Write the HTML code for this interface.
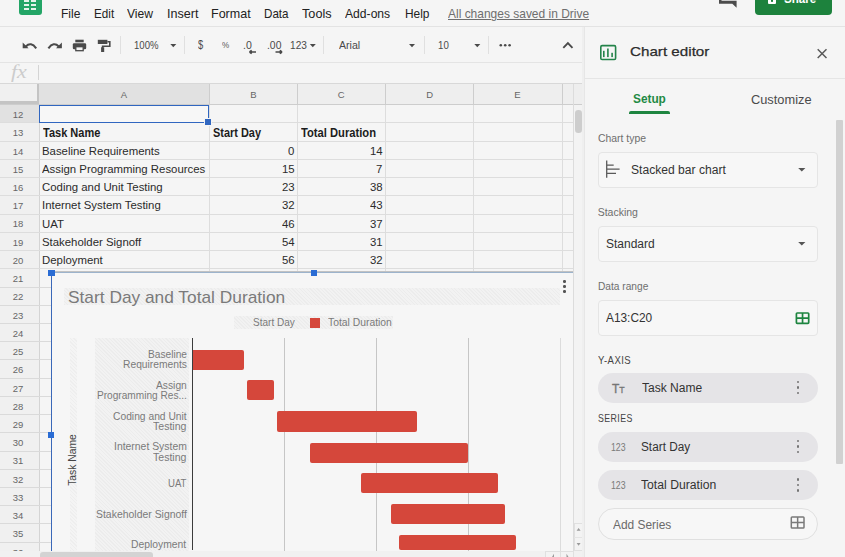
<!DOCTYPE html>
<html><head><meta charset="utf-8">
<style>
*{margin:0;padding:0;box-sizing:border-box}
html,body{width:845px;height:557px;overflow:hidden;background:#f5f5f5;font-family:"Liberation Sans",sans-serif}
#root{position:relative;width:845px;height:557px;overflow:hidden;background:#f5f5f5}
.a{position:absolute}
.t{position:absolute;white-space:nowrap;line-height:1;transform-origin:0 50%}
</style></head><body>
<div id="root">
<div class="a" style="left:19px;top:-6px;width:22.5px;height:21px;background:#23a566;border-radius:3px"></div>
<div class="a" style="left:24px;top:-1px;width:12.2px;height:11.4px;background:#e4f3ea;"></div>
<div class="a" style="left:24px;top:2.4px;width:12.2px;height:1.6px;background:#23a566;"></div>
<div class="a" style="left:29.4px;top:-1px;width:1.5px;height:11.4px;background:#23a566;"></div>
<div class="a" style="left:24px;top:6.3px;width:12.2px;height:1.5px;background:#23a566;"></div>
<div class="t" style="left:61.10px;top:7.25px;font-size:13px;color:#222;transform:scaleX(0.9266);">File</div>
<div class="t" style="left:93.60px;top:7.25px;font-size:13px;color:#222;transform:scaleX(0.8983);">Edit</div>
<div class="t" style="left:127.30px;top:7.25px;font-size:13px;color:#222;transform:scaleX(0.9321);">View</div>
<div class="t" style="left:166.50px;top:7.25px;font-size:13px;color:#222;transform:scaleX(0.9662);">Insert</div>
<div class="t" style="left:211.30px;top:7.25px;font-size:13px;color:#222;transform:scaleX(0.9639);">Format</div>
<div class="t" style="left:263.90px;top:7.25px;font-size:13px;color:#222;transform:scaleX(0.8945);">Data</div>
<div class="t" style="left:302.40px;top:7.25px;font-size:13px;color:#222;transform:scaleX(0.9745);">Tools</div>
<div class="t" style="left:345.40px;top:7.25px;font-size:13px;color:#222;transform:scaleX(0.9332);">Add-ons</div>
<div class="t" style="left:404.50px;top:7.25px;font-size:13px;color:#222;transform:scaleX(0.9159);">Help</div>
<div class="t" style="left:448.30px;top:7.25px;font-size:13px;color:#6e6e6e;transform:scaleX(0.9211);text-decoration:underline;text-decoration-thickness:1px;text-underline-offset:0.5px;">All changes saved in Drive</div>
<svg class="a" style="left:716px;top:0" width="26" height="10" viewBox="716 0 26 10"><path d="M719 -2 h2.500 v2.700 h15.100 v7 l-4.300 -4 h-13.300z" fill="#4c4c4c"/></svg>
<div class="a" style="left:754.7px;top:-10px;width:77.4px;height:25.4px;background:#1d823d;border-radius:4px"></div>
<div class="t" style="left:784.20px;top:-7.65px;font-size:13px;color:#fff;font-weight:bold;transform:scaleX(0.8886);">Share</div>
<div class="a" style="left:768px;top:-3px;width:8px;height:6.5px;background:#fff;border-radius:1px"></div>
<div class="a" style="left:771.3px;top:-1px;width:1.4px;height:2.6px;background:#1d823d;border-radius:0.7px"></div>
<div class="a" style="left:0px;top:26px;width:845px;height:1px;background:#e3e3e3;"></div>
<svg class="a" style="left:0;top:27px" width="584" height="36" viewBox="0 27 584 36">
 <g fill="none" stroke="#4a4a4a" stroke-width="2.100">
  <path d="M25.800 46.400 Q31 41.300 36.200 48.300"/>
  <path d="M58.800 46.400 Q53.600 41.300 48.400 48.300"/>
 </g>
 <path d="M22.700 42.400 v5.900 h5.900z" fill="#4a4a4a"/>
 <path d="M61.900 42.400 v5.900 h-5.900z" fill="#4a4a4a"/>
 <rect x="75.300" y="39.700" width="8.400" height="2.600" fill="#4a4a4a"/>
 <rect x="72.800" y="43.200" width="13.400" height="6" rx="1.300" fill="#4a4a4a"/>
 <rect x="75.800" y="46.700" width="7.400" height="4" fill="#f5f5f5" stroke="#4a4a4a" stroke-width="1.300"/>
 <rect x="97.800" y="39.800" width="9.600" height="4.200" fill="#4a4a4a"/>
 <path d="M107.400 41.700 h2.400 v4.600 h-7.200 v2" fill="none" stroke="#4a4a4a" stroke-width="1.600"/>
 <rect x="101.100" y="47.300" width="3.100" height="4.700" fill="#4a4a4a"/>
 <g stroke="#e0e0e0" stroke-width="1">
  <line x1="120.500" y1="36" x2="120.500" y2="54"/>
  <line x1="184.500" y1="36" x2="184.500" y2="54"/>
  <line x1="323.500" y1="36" x2="323.500" y2="54"/>
  <line x1="424.500" y1="36" x2="424.500" y2="54"/>
  <line x1="488.500" y1="36" x2="488.500" y2="54"/>
 </g>
 <path d="M170.300 44 h6 l-3 3.300z" fill="#4a4a4a"/>
 <path d="M309.800 44 h6 l-3 3.300z" fill="#4a4a4a"/>
 <path d="M409 44 h6 l-3 3.300z" fill="#4a4a4a"/>
 <path d="M474.300 44 h6 l-3 3.300z" fill="#4a4a4a"/>
 <path d="M249.500 52 h6.500 M249.500 52 l2.200 -1.700 M249.500 52 l2.200 1.700" stroke="#4a4a4a" stroke-width="1.600" fill="none"/>
 <path d="M275.500 52 h6.500 M282 52 l-2.200 -1.700 M282 52 l-2.200 1.700" stroke="#4a4a4a" stroke-width="1.600" fill="none"/>
 <circle cx="500.800" cy="45.300" r="1.300" fill="#4a4a4a"/><circle cx="505.200" cy="45.300" r="1.300" fill="#4a4a4a"/><circle cx="509.600" cy="45.300" r="1.300" fill="#4a4a4a"/>
 <path d="M563.300 47.800 l4.600 -4.600 4.600 4.600" fill="none" stroke="#4a4a4a" stroke-width="1.900"/>
</svg>
<div class="t" style="left:134.00px;top:39.63px;font-size:11px;color:#4a4a4a;transform:scaleX(0.8711);">100%</div>
<div class="t" style="left:198.20px;top:39.44px;font-size:12px;color:#4a4a4a;transform:scaleX(0.7776);">$</div>
<div class="t" style="left:221.60px;top:40.26px;font-size:9.5px;color:#5a5a5a;transform:scaleX(0.8533);">%</div>
<div class="t" style="left:242.80px;top:39.93px;font-size:11px;color:#4a4a4a;transform:scaleX(0.9578);">.0</div>
<div class="t" style="left:266.60px;top:39.93px;font-size:11px;color:#4a4a4a;transform:scaleX(0.9404);">.00</div>
<div class="t" style="left:290.00px;top:39.93px;font-size:11px;color:#4a4a4a;transform:scaleX(0.9197);">123</div>
<div class="t" style="left:339.00px;top:39.83px;font-size:11px;color:#4a4a4a;transform:scaleX(0.9636);">Arial</div>
<div class="t" style="left:438.20px;top:39.63px;font-size:11px;color:#4a4a4a;transform:scaleX(0.8816);">10</div>
<div class="a" style="left:0px;top:62px;width:584px;height:1px;background:#e4e4e4;"></div>
<div class="t" style="left:10.500px;top:62.500px;font-family:'Liberation Serif',serif;font-style:italic;font-size:18px;color:#cccccc;transform:scaleX(1.22)">fx</div>
<div class="a" style="left:38px;top:65px;width:1px;height:15px;background:#d4d4d4;"></div>
<div class="a" style="left:0px;top:83px;width:584px;height:1px;background:#d8d8d8;"></div>
<div class="a" style="left:0px;top:84px;width:574px;height:20px;background:#eeeeee;"></div>
<div class="a" style="left:39px;top:84px;width:170px;height:20px;background:#e1e1e1;"></div>
<div class="a" style="left:0px;top:84px;width:39px;height:21px;background:#f0f0f0;border-right:2.500px solid #c4c4c4;border-bottom:4px solid #c4c4c4"></div>
<div class="t" style="left:120.81px;top:89.66px;font-size:9.5px;color:#666;">A</div>
<div class="t" style="left:250.24px;top:89.66px;font-size:9.5px;color:#666;">B</div>
<div class="t" style="left:337.86px;top:89.66px;font-size:9.5px;color:#666;">C</div>
<div class="t" style="left:426.26px;top:89.66px;font-size:9.5px;color:#666;">D</div>
<div class="t" style="left:514.34px;top:89.66px;font-size:9.5px;color:#666;">E</div>
<div class="a" style="left:209px;top:84px;width:1px;height:20px;background:#cdcdcd;"></div>
<div class="a" style="left:297px;top:84px;width:1px;height:20px;background:#cdcdcd;"></div>
<div class="a" style="left:385px;top:84px;width:1px;height:20px;background:#cdcdcd;"></div>
<div class="a" style="left:473px;top:84px;width:1px;height:20px;background:#cdcdcd;"></div>
<div class="a" style="left:562px;top:84px;width:1px;height:20px;background:#cdcdcd;"></div>
<div class="a" style="left:0px;top:104px;width:574px;height:1px;background:#cdcdcd;"></div>
<div class="a" style="left:0px;top:105px;width:39px;height:452px;background:#f0f0f0;"></div>
<div class="a" style="left:0px;top:105px;width:39px;height:18px;background:#e1e1e1;"></div>
<div class="a" style="left:39px;top:105px;width:1px;height:452px;background:#d4d4d4;"></div>
<div class="t" style="left:12.72px;top:110.07px;font-size:9.5px;color:#666;">12</div>
<div class="a" style="left:0px;top:122.43px;width:574px;height:1px;background:#dddddd;"></div>
<div class="t" style="left:12.72px;top:128.30px;font-size:9.5px;color:#666;">13</div>
<div class="a" style="left:0px;top:140.66px;width:574px;height:1px;background:#dddddd;"></div>
<div class="t" style="left:12.72px;top:146.53px;font-size:9.5px;color:#666;">14</div>
<div class="a" style="left:0px;top:158.89px;width:574px;height:1px;background:#dddddd;"></div>
<div class="t" style="left:12.72px;top:164.76px;font-size:9.5px;color:#666;">15</div>
<div class="a" style="left:0px;top:177.12px;width:574px;height:1px;background:#dddddd;"></div>
<div class="t" style="left:12.72px;top:182.99px;font-size:9.5px;color:#666;">16</div>
<div class="a" style="left:0px;top:195.35px;width:574px;height:1px;background:#dddddd;"></div>
<div class="t" style="left:12.72px;top:201.22px;font-size:9.5px;color:#666;">17</div>
<div class="a" style="left:0px;top:213.58px;width:574px;height:1px;background:#dddddd;"></div>
<div class="t" style="left:12.72px;top:219.45px;font-size:9.5px;color:#666;">18</div>
<div class="a" style="left:0px;top:231.81px;width:574px;height:1px;background:#dddddd;"></div>
<div class="t" style="left:12.72px;top:237.68px;font-size:9.5px;color:#666;">19</div>
<div class="a" style="left:0px;top:250.04px;width:574px;height:1px;background:#dddddd;"></div>
<div class="t" style="left:12.72px;top:255.91px;font-size:9.5px;color:#666;">20</div>
<div class="a" style="left:0px;top:268.27px;width:574px;height:1px;background:#dddddd;"></div>
<div class="t" style="left:12.72px;top:274.14px;font-size:9.5px;color:#666;">21</div>
<div class="a" style="left:0px;top:286.5px;width:51px;height:1px;background:#dadada;"></div>
<div class="t" style="left:12.72px;top:292.37px;font-size:9.5px;color:#666;">22</div>
<div class="a" style="left:0px;top:304.73px;width:51px;height:1px;background:#dadada;"></div>
<div class="t" style="left:12.72px;top:310.60px;font-size:9.5px;color:#666;">23</div>
<div class="a" style="left:0px;top:322.96px;width:51px;height:1px;background:#dadada;"></div>
<div class="t" style="left:12.72px;top:328.83px;font-size:9.5px;color:#666;">24</div>
<div class="a" style="left:0px;top:341.19px;width:51px;height:1px;background:#dadada;"></div>
<div class="t" style="left:12.72px;top:347.06px;font-size:9.5px;color:#666;">25</div>
<div class="a" style="left:0px;top:359.42px;width:51px;height:1px;background:#dadada;"></div>
<div class="t" style="left:12.72px;top:365.29px;font-size:9.5px;color:#666;">26</div>
<div class="a" style="left:0px;top:377.65px;width:51px;height:1px;background:#dadada;"></div>
<div class="t" style="left:12.72px;top:383.52px;font-size:9.5px;color:#666;">27</div>
<div class="a" style="left:0px;top:395.88px;width:51px;height:1px;background:#dadada;"></div>
<div class="t" style="left:12.72px;top:401.75px;font-size:9.5px;color:#666;">28</div>
<div class="a" style="left:0px;top:414.11px;width:51px;height:1px;background:#dadada;"></div>
<div class="t" style="left:12.72px;top:419.98px;font-size:9.5px;color:#666;">29</div>
<div class="a" style="left:0px;top:432.34px;width:51px;height:1px;background:#dadada;"></div>
<div class="t" style="left:12.72px;top:438.21px;font-size:9.5px;color:#666;">30</div>
<div class="a" style="left:0px;top:450.57px;width:51px;height:1px;background:#dadada;"></div>
<div class="t" style="left:12.72px;top:456.44px;font-size:9.5px;color:#666;">31</div>
<div class="a" style="left:0px;top:468.8px;width:51px;height:1px;background:#dadada;"></div>
<div class="t" style="left:12.72px;top:474.67px;font-size:9.5px;color:#666;">32</div>
<div class="a" style="left:0px;top:487.03px;width:51px;height:1px;background:#dadada;"></div>
<div class="t" style="left:12.72px;top:492.90px;font-size:9.5px;color:#666;">33</div>
<div class="a" style="left:0px;top:505.26px;width:51px;height:1px;background:#dadada;"></div>
<div class="t" style="left:12.72px;top:511.13px;font-size:9.5px;color:#666;">34</div>
<div class="a" style="left:0px;top:523.49px;width:51px;height:1px;background:#dadada;"></div>
<div class="t" style="left:12.72px;top:529.36px;font-size:9.5px;color:#666;">35</div>
<div class="a" style="left:0px;top:541.72px;width:51px;height:1px;background:#dadada;"></div>
<div class="t" style="left:12.72px;top:547.59px;font-size:9.5px;color:#666;">36</div>
<div class="a" style="left:0px;top:559.95px;width:51px;height:1px;background:#dadada;"></div>
<div class="a" style="left:209px;top:105px;width:1px;height:168px;background:#dddddd;"></div>
<div class="a" style="left:297px;top:105px;width:1px;height:168px;background:#dddddd;"></div>
<div class="a" style="left:385px;top:105px;width:1px;height:168px;background:#dddddd;"></div>
<div class="a" style="left:473px;top:105px;width:1px;height:168px;background:#dddddd;"></div>
<div class="a" style="left:562px;top:105px;width:1px;height:168px;background:#dddddd;"></div>
<div class="a" style="left:38.5px;top:105.2px;width:170px;height:17.9px;background:#f7f7f7;border:1.700px solid #3066c0"></div>
<div class="a" style="left:205px;top:119.2px;width:5.5px;height:5.5px;background:#3066c0;outline:1px solid #f5f5f5"></div>
<div class="t" style="left:43.30px;top:127.48px;font-size:12px;color:#1c1c1c;font-weight:bold;transform:scaleX(0.9168);">Task Name</div>
<div class="t" style="left:213.00px;top:127.48px;font-size:12px;color:#1c1c1c;font-weight:bold;transform:scaleX(0.9110);">Start Day</div>
<div class="t" style="left:301.00px;top:127.48px;font-size:12px;color:#1c1c1c;font-weight:bold;transform:scaleX(0.9324);">Total Duration</div>
<div class="t" style="left:41.90px;top:145.76px;font-size:11.5px;color:#2b2b2b;transform:scaleX(0.9900);">Baseline Requirements</div>
<div class="t" style="left:287.89px;top:145.76px;font-size:11.5px;color:#2b2b2b;transform:scaleX(0.9900);">0</div>
<div class="t" style="left:370.02px;top:145.76px;font-size:11.5px;color:#2b2b2b;transform:scaleX(0.9900);">14</div>
<div class="t" style="left:41.90px;top:163.99px;font-size:11.5px;color:#2b2b2b;transform:scaleX(0.9900);">Assign Programming Resources</div>
<div class="t" style="left:281.52px;top:163.99px;font-size:11.5px;color:#2b2b2b;transform:scaleX(0.9900);">15</div>
<div class="t" style="left:376.39px;top:163.99px;font-size:11.5px;color:#2b2b2b;transform:scaleX(0.9900);">7</div>
<div class="t" style="left:41.90px;top:182.22px;font-size:11.5px;color:#2b2b2b;transform:scaleX(0.9900);">Coding and Unit Testing</div>
<div class="t" style="left:281.52px;top:182.22px;font-size:11.5px;color:#2b2b2b;transform:scaleX(0.9900);">23</div>
<div class="t" style="left:370.02px;top:182.22px;font-size:11.5px;color:#2b2b2b;transform:scaleX(0.9900);">38</div>
<div class="t" style="left:41.90px;top:200.45px;font-size:11.5px;color:#2b2b2b;transform:scaleX(0.9900);">Internet System Testing</div>
<div class="t" style="left:281.52px;top:200.45px;font-size:11.5px;color:#2b2b2b;transform:scaleX(0.9900);">32</div>
<div class="t" style="left:370.02px;top:200.45px;font-size:11.5px;color:#2b2b2b;transform:scaleX(0.9900);">43</div>
<div class="t" style="left:41.90px;top:218.68px;font-size:11.5px;color:#2b2b2b;transform:scaleX(0.9900);">UAT</div>
<div class="t" style="left:281.52px;top:218.68px;font-size:11.5px;color:#2b2b2b;transform:scaleX(0.9900);">46</div>
<div class="t" style="left:370.02px;top:218.68px;font-size:11.5px;color:#2b2b2b;transform:scaleX(0.9900);">37</div>
<div class="t" style="left:41.90px;top:236.91px;font-size:11.5px;color:#2b2b2b;transform:scaleX(0.9900);">Stakeholder Signoff</div>
<div class="t" style="left:281.52px;top:236.91px;font-size:11.5px;color:#2b2b2b;transform:scaleX(0.9900);">54</div>
<div class="t" style="left:370.02px;top:236.91px;font-size:11.5px;color:#2b2b2b;transform:scaleX(0.9900);">31</div>
<div class="t" style="left:41.90px;top:255.14px;font-size:11.5px;color:#2b2b2b;transform:scaleX(0.9900);">Deployment</div>
<div class="t" style="left:281.52px;top:255.14px;font-size:11.5px;color:#2b2b2b;transform:scaleX(0.9900);">56</div>
<div class="t" style="left:370.02px;top:255.14px;font-size:11.5px;color:#2b2b2b;transform:scaleX(0.9900);">32</div>
<div class="a" style="left:573px;top:84px;width:11px;height:473px;background:#f3f3f3;border-left:1px solid #dcdcdc"></div>
<div class="a" style="left:574px;top:84px;width:10px;height:20px;background:#eeeeee;"></div>
<div class="a" style="left:574px;top:104px;width:10px;height:1px;background:#cdcdcd;"></div>
<div class="a" style="left:575px;top:110px;width:6.6px;height:22.5px;background:#cdcdcd;border-radius:3.300px"></div>
<div class="a" style="left:52px;top:271px;width:521px;height:286px;background:#f6f6f6;"></div>
<div class="a" style="left:50.6px;top:271px;width:1.5px;height:280px;background:#3a68b8;"></div>
<div class="a" style="left:52px;top:270.5px;width:521px;height:1px;background:#c2c2c2;"></div>
<div class="a" style="left:52px;top:272.3px;width:521px;height:1px;background:#9cb3cc;"></div>
<div class="a" style="left:48.4px;top:269.5px;width:6.2px;height:6.2px;background:#2a6cd4;"></div>
<div class="a" style="left:311px;top:269.5px;width:6.2px;height:6.2px;background:#2a6cd4;"></div>
<div class="a" style="left:48px;top:431.8px;width:6.4px;height:6.4px;background:#2a6cd4;"></div>
<div class="a" style="left:64px;top:288px;width:495.5px;height:17px;background:repeating-linear-gradient(45deg,#ececec 0,#ececec 1px,#f2f2f2 1px,#f2f2f2 2.500px);"></div>
<div class="a" style="left:233.8px;top:316.3px;width:159.7px;height:13.2px;background:repeating-linear-gradient(45deg,#ececec 0,#ececec 1px,#f2f2f2 1px,#f2f2f2 2.500px);"></div>
<div class="a" style="left:94.8px;top:337.5px;width:94px;height:213px;background:repeating-linear-gradient(45deg,#ececec 0,#ececec 1px,#f2f2f2 1px,#f2f2f2 2.500px);"></div>
<div class="a" style="left:69.5px;top:337.5px;width:7.5px;height:213px;background:repeating-linear-gradient(45deg,#eeeeee 0,#eeeeee 1px,#f4f4f4 1px,#f4f4f4 2.500px);"></div>
<div class="t" style="left:67.70px;top:288.50px;font-size:17px;color:#7a7a7a;transform:scaleX(1.0185);">Start Day and Total Duration</div>
<div class="t" style="left:253.20px;top:317.27px;font-size:10.5px;color:#7a7a7a;transform:scaleX(0.9554);">Start Day</div>
<div class="a" style="left:309.8px;top:317.6px;width:10px;height:10px;background:#d5473b;"></div>
<div class="t" style="left:328.10px;top:317.27px;font-size:10.5px;color:#7a7a7a;transform:scaleX(0.9859);">Total Duration</div>
<div class="a" style="left:562.8px;top:279.6px;width:3px;height:3px;background:#555;border-radius:40%"></div>
<div class="a" style="left:562.8px;top:284.9px;width:3px;height:3px;background:#555;border-radius:40%"></div>
<div class="a" style="left:562.8px;top:290.2px;width:3px;height:3px;background:#555;border-radius:40%"></div>
<div class="a" style="left:284.1px;top:337.7px;width:1px;height:213px;background:#c6c6c6;"></div>
<div class="a" style="left:376px;top:337.7px;width:1px;height:213px;background:#c6c6c6;"></div>
<div class="a" style="left:467.9px;top:337.7px;width:1px;height:213px;background:#c6c6c6;"></div>
<div class="a" style="left:559.8px;top:337.7px;width:1px;height:213px;background:#dcdcdc;"></div>
<div class="a" style="left:191.9px;top:338.4px;width:1.1px;height:211.5px;background:#3c3c3c;"></div>
<div class="a" style="left:192.7px;top:350px;width:51.1px;height:19.8px;background:#d5473b;border-radius:0 2px 2px 0"></div>
<div class="a" style="left:247.3px;top:380.4px;width:26.3px;height:20px;background:#d5473b;border-radius:2px"></div>
<div class="a" style="left:276.8px;top:411.4px;width:140.2px;height:20.2px;background:#d5473b;border-radius:2px"></div>
<div class="a" style="left:310px;top:442.8px;width:158px;height:20.2px;background:#d5473b;border-radius:2px"></div>
<div class="a" style="left:361.2px;top:473.2px;width:136.6px;height:20.3px;background:#d5473b;border-radius:2px"></div>
<div class="a" style="left:391px;top:504.2px;width:113.7px;height:20.1px;background:#d5473b;border-radius:2px"></div>
<div class="a" style="left:398.5px;top:535.3px;width:117.7px;height:14.7px;background:#d5473b;border-radius:2px"></div>
<div class="t" style="left:147.60px;top:348.87px;font-size:10.5px;color:#7a7a7a;transform:scaleX(0.9665);">Baseline</div>
<div class="t" style="left:122.50px;top:359.47px;font-size:10.5px;color:#7a7a7a;transform:scaleX(0.9790);">Requirements</div>
<div class="t" style="left:155.70px;top:380.07px;font-size:10.5px;color:#7a7a7a;transform:scaleX(0.9778);">Assign</div>
<div class="t" style="left:96.60px;top:390.17px;font-size:10.5px;color:#7a7a7a;transform:scaleX(0.9628);">Programming Res...</div>
<div class="t" style="left:112.80px;top:410.97px;font-size:10.5px;color:#7a7a7a;transform:scaleX(0.9786);">Coding and Unit</div>
<div class="t" style="left:153.10px;top:420.87px;font-size:10.5px;color:#7a7a7a;transform:scaleX(1.0045);">Testing</div>
<div class="t" style="left:113.60px;top:441.47px;font-size:10.5px;color:#7a7a7a;transform:scaleX(0.9910);">Internet System</div>
<div class="t" style="left:153.10px;top:451.57px;font-size:10.5px;color:#7a7a7a;transform:scaleX(1.0045);">Testing</div>
<div class="t" style="left:168.00px;top:477.97px;font-size:10.5px;color:#7a7a7a;transform:scaleX(0.9136);">UAT</div>
<div class="t" style="left:95.50px;top:508.67px;font-size:10.5px;color:#7a7a7a;transform:scaleX(0.9945);">Stakeholder Signoff</div>
<div class="t" style="left:131.40px;top:539.47px;font-size:10.5px;color:#7a7a7a;transform:scaleX(0.9839);">Deployment</div>
<div class="t" style="left:72px;top:460px;font-size:10.500px;color:#454545;transform:translate(-50%,-50%) rotate(-90deg) scaleX(0.9829);transform-origin:50% 50%">Task Name</div>
<div class="a" style="left:0px;top:551px;width:584px;height:6px;background:#f1f1f1;"></div>
<div class="a" style="left:40px;top:551.5px;width:112.6px;height:6px;background:#d3d3d3;border-radius:3px 3px 0 0"></div>
<div class="a" style="left:573.5px;top:523.3px;width:10.5px;height:27.7px;background:#f3f3f3;border:1px solid #e0e0e0;border-right:0"></div>
<div class="a" style="left:574px;top:537px;width:10px;height:1px;background:#e4e4e4;"></div>
<div class="a" style="left:544.5px;top:551px;width:29px;height:6px;background:#f3f3f3;border:1px solid #e0e0e0;border-bottom:0"></div>
<div class="a" style="left:560px;top:551px;width:1px;height:6px;background:#e0e0e0;"></div>
<svg class="a" style="left:573px;top:523px" width="11" height="28"><path d="M3.600 7.800 h4 l-2 -2.800z M3.600 20 h4 l-2 2.800z" fill="#9a9a9a"/></svg>
<svg class="a" style="left:544px;top:551px" width="30" height="6"><path d="M10 6 v-3.200 l-2 3.200z M22.500 6 v-3.200 l2 3.200z" fill="#9a9a9a"/></svg>
<div class="a" style="left:584px;top:27px;width:261px;height:530px;background:#f5f5f5;border-left:1px solid #e6e6e6"></div>
<div class="a" style="left:582px;top:27px;width:2px;height:530px;background:#efefef;"></div>
<svg class="a" style="left:598px;top:43px" width="20" height="19" viewBox="598 43 20 19">
 <rect x="600.800" y="45.600" width="14.800" height="13.900" rx="1.300" fill="none" stroke="#24834a" stroke-width="1.600"/>
 <rect x="603" y="50.800" width="1.600" height="6.300" fill="#24834a"/>
 <rect x="607.100" y="48.500" width="1.600" height="8.600" fill="#24834a"/>
 <rect x="611.300" y="52.800" width="1.600" height="4.300" fill="#24834a"/>
</svg>
<div class="t" style="left:629.60px;top:45.31px;font-size:13.5px;color:#2c2c2c;transform:scaleX(1.1252);-webkit-text-stroke:0.25px #2c2c2c;">Chart editor</div>
<svg class="a" style="left:816px;top:47px" width="13" height="13" viewBox="816 47 13 13"><path d="M817.700 49.200 l8.800 8.800 M826.500 49.200 l-8.800 8.800" stroke="#5a5a5a" stroke-width="1.500" fill="none"/></svg>
<div class="a" style="left:585px;top:77.6px;width:260px;height:1px;background:#e5e5e5;"></div>
<div class="t" style="left:632.70px;top:93.44px;font-size:12px;color:#1f8a44;font-weight:bold;transform:scaleX(0.9846);">Setup</div>
<div class="a" style="left:629.3px;top:111px;width:40.3px;height:2.8px;background:#1e8540;border-radius:2px 2px 0 0"></div>
<div class="t" style="left:750.50px;top:93.74px;font-size:12px;color:#4a4a4a;transform:scaleX(1.0673);">Customize</div>
<div class="a" style="left:836.2px;top:120.2px;width:6.4px;height:343.5px;background:#d1d1d1;border-radius:1px"></div>
<div class="t" style="left:597.70px;top:132.87px;font-size:10.5px;color:#6e6e6e;transform:scaleX(0.9910);">Chart type</div>
<div class="a" style="left:598px;top:151.5px;width:220px;height:36.2px;background:#f7f7f7;border:1px solid #e5e5e5;border-radius:4px"></div>
<svg class="a" style="left:604px;top:159px" width="18" height="20" viewBox="604 159 18 20" fill="none" stroke="#5a5a5a" stroke-width="1.300"><path d="M606.700 160.500 v17.200 M606.700 165.200 h7 M606.700 169.100 h12.900 M606.700 173.300 h9.300"/></svg>
<div class="t" style="left:630.60px;top:163.89px;font-size:12.5px;color:#333;transform:scaleX(0.9673);">Stacked bar chart</div>
<svg class="a" style="left:798px;top:167.7px" width="8" height="4"><path d="M0.200 0 h7.200 l-3.600 3.600z" fill="#555"/></svg>
<div class="t" style="left:597.70px;top:206.77px;font-size:10.5px;color:#6e6e6e;">Stacking</div>
<div class="a" style="left:598px;top:225.8px;width:220px;height:36.7px;background:#f7f7f7;border:1px solid #e5e5e5;border-radius:4px"></div>
<div class="t" style="left:605.90px;top:238.19px;font-size:12.5px;color:#333;transform:scaleX(0.9596);">Standard</div>
<svg class="a" style="left:798px;top:242.3px" width="8" height="4"><path d="M0.200 0 h7.200 l-3.600 3.600z" fill="#555"/></svg>
<div class="t" style="left:597.70px;top:281.37px;font-size:10.5px;color:#6e6e6e;transform:scaleX(0.9685);">Data range</div>
<div class="a" style="left:598px;top:300px;width:220px;height:36.2px;background:#f7f7f7;border:1px solid #e5e5e5;border-radius:4px"></div>
<div class="t" style="left:605.90px;top:312.39px;font-size:12.5px;color:#333;transform:scaleX(0.9481);">A13:C20</div>
<svg class="a" style="left:794px;top:311px" width="17" height="15" viewBox="794 311 17 15" fill="none" stroke="#1e8540" stroke-width="1.700"><rect x="796.400" y="313" width="12.300" height="10.400" rx="0.800"/><path d="M802.550 313 v10.400 M796.400 318.200 h12.300"/></svg>
<div class="t" style="left:597.70px;top:354.57px;font-size:10.5px;color:#444;letter-spacing:0.5px;transform:scaleX(0.9099);">Y-AXIS</div>
<div class="a" style="left:598px;top:373.1px;width:220px;height:30px;background:#e5e4e7;border-radius:15px"></div>
<div class="t" style="left:612.100px;top:383.44px;font-size:12px;color:#757575;letter-spacing:-0.2px;-webkit-text-stroke:0.3px #757575">T<span style="font-size:8.800px">T</span></div>
<div class="t" style="left:641.80px;top:381.89px;font-size:12.5px;color:#333;transform:scaleX(0.9632);">Task Name</div>
<div class="a" style="left:796.5px;top:380.6px;width:2.6px;height:2.6px;background:#747474;border-radius:50%"></div>
<div class="a" style="left:796.5px;top:386.2px;width:2.6px;height:2.6px;background:#747474;border-radius:50%"></div>
<div class="a" style="left:796.5px;top:391.8px;width:2.6px;height:2.6px;background:#747474;border-radius:50%"></div>
<div class="t" style="left:597.70px;top:413.37px;font-size:10.5px;color:#444;letter-spacing:0.5px;transform:scaleX(0.8390);">SERIES</div>
<div class="a" style="left:598px;top:431.6px;width:220px;height:30px;background:#e5e4e7;border-radius:15px"></div>
<div class="t" style="left:611.30px;top:441.57px;font-size:10.5px;color:#7a7a7a;transform:scaleX(0.8343);">123</div>
<div class="t" style="left:641.00px;top:440.69px;font-size:12.5px;color:#333;transform:scaleX(0.9439);">Start Day</div>
<div class="a" style="left:796.5px;top:439.6px;width:2.6px;height:2.6px;background:#747474;border-radius:50%"></div>
<div class="a" style="left:796.5px;top:445.2px;width:2.6px;height:2.6px;background:#747474;border-radius:50%"></div>
<div class="a" style="left:796.5px;top:450.8px;width:2.6px;height:2.6px;background:#747474;border-radius:50%"></div>
<div class="a" style="left:598px;top:470.1px;width:220px;height:30px;background:#e5e4e7;border-radius:15px"></div>
<div class="t" style="left:611.30px;top:480.17px;font-size:10.5px;color:#7a7a7a;transform:scaleX(0.8343);">123</div>
<div class="t" style="left:640.80px;top:479.19px;font-size:12.5px;color:#333;transform:scaleX(0.9750);">Total Duration</div>
<div class="a" style="left:796.5px;top:478.1px;width:2.6px;height:2.6px;background:#747474;border-radius:50%"></div>
<div class="a" style="left:796.5px;top:483.7px;width:2.6px;height:2.6px;background:#747474;border-radius:50%"></div>
<div class="a" style="left:796.5px;top:489.3px;width:2.6px;height:2.6px;background:#747474;border-radius:50%"></div>
<div class="a" style="left:598px;top:507.5px;width:220px;height:32px;background:#f7f7f7;border:1px solid #e0e0e0;border-radius:16px"></div>
<div class="t" style="left:613.20px;top:518.59px;font-size:12.5px;color:#6a6a6a;transform:scaleX(0.9538);">Add Series</div>
<svg class="a" style="left:789px;top:515px" width="18" height="15" viewBox="789 515 18 15" fill="none" stroke="#7a7a7a" stroke-width="1.500"><rect x="791.300" y="517" width="12.700" height="11" rx="0.800"/><path d="M797.650 517 v11 M791.300 522.500 h12.700"/></svg>
</div>
</body></html>
